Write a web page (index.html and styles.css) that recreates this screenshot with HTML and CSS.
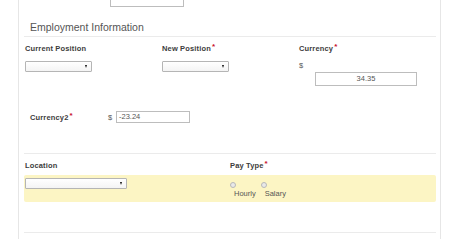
FILE: index.html
```html
<!DOCTYPE html>
<html>
<head>
<meta charset="utf-8">
<link rel="stylesheet" href="styles.css">
</head>
<body>
<div class="frame">
  <div class="head">
    <div class="top-input"></div>
    <h2 class="heading">Employment Information</h2>
  </div>
  <div class="section sec1">
    <div class="row3">
      <div class="col">
        <div class="label">Current Position</div>
        <div class="select w-sm"><i class="caret"></i></div>
      </div>
      <div class="col">
        <div class="label">New Position<span class="req">*</span></div>
        <div class="select w-sm"><i class="caret"></i></div>
      </div>
      <div class="col">
        <div class="label">Currency<span class="req">*</span></div>
        <div class="dollar">$</div>
        <div class="money">34.35</div>
      </div>
    </div>
    <div class="row-c2">
      <div class="label c2-label">Currency2<span class="req">*</span></div>
      <span class="dollar-inline">$</span>
      <div class="text-input">-23.24</div>
    </div>
  </div>
  <div class="section sec2">
    <div class="row2">
      <div class="label">Location</div>
      <div class="label">Pay Type<span class="req">*</span></div>
    </div>
    <div class="band">
      <div class="band-col">
        <div class="select w-lg"><i class="caret"></i></div>
      </div>
      <div class="band-col radios">
        <div class="radio-item"><span class="radio"></span><span class="radio-label">Hourly</span></div>
        <div class="radio-item"><span class="radio"></span><span class="radio-label">Salary</span></div>
      </div>
    </div>
  </div>
</div>
</body>
</html>
```
FILE: styles.css
```css
* { box-sizing: border-box; }
html, body { margin: 0; padding: 0; background: #fff; }
body {
  font-family: "Liberation Sans", Arial, sans-serif;
  color: #444;
  width: 474px;
  height: 239px;
  overflow: hidden;
}
.frame {
  margin-left: 18px;
  width: 423px;
  height: 239px;
  border-left: 1px solid #e6e6e6;
  border-right: 1px solid #e6e6e6;
}
.head {
  margin: 0 4px 0 5px;
  border-bottom: 1px solid #ebebeb;
  height: 37px;
}
.top-input {
  margin-left: 86px;
  width: 74px;
  height: 7px;
  border: 1px solid #bdbdbd;
  border-top: none;
}
.heading {
  margin: 14px 0 0 6px;
  font-size: 10.5px;
  line-height: 12px;
  font-weight: normal;
  color: #555;
}
.section {
  margin: 0 4px 0 5px;
  border-bottom: 1px solid #ebebeb;
}
.sec1 { padding: 7px 0 30px; }
.row3 {
  display: grid;
  grid-template-columns: 137px 137px 137px;
}
.col { padding-left: 1px; }
.label {
  font-size: 7.5px;
  line-height: 9px;
  font-weight: bold;
  color: #3c3c3c;
  letter-spacing: 0.15px;
}
.req {
  color: #c8102e;
  font-size: 8px;
  position: relative;
  top: -2px;
  margin-left: 1px;
}
.select {
  margin-top: 8px;
  height: 11px;
  border: 1px solid #b5b5b5;
  border-radius: 1px;
  background: linear-gradient(#fff, #f4f4f4);
  display: flex;
  justify-content: flex-end;
  align-items: center;
  padding-right: 4px;
}
.w-sm { width: 67px; }
.w-lg { width: 102px; margin-top: 3px; }
.caret {
  width: 0;
  height: 0;
  border-left: 1.5px solid transparent;
  border-right: 1.5px solid transparent;
  border-top: 3px solid #111;
}
.dollar {
  margin-top: 8px;
  font-size: 7.5px;
  line-height: 9px;
  color: #555;
}
.money {
  margin: 2px 0 0 16px;
  width: 102px;
  height: 14px;
  border: 1px solid #bdbdbd;
  font-size: 7.5px;
  line-height: 12px;
  text-align: center;
  color: #555;
}
.row-c2 {
  margin-top: 25px;
  display: flex;
  align-items: center;
  padding-left: 6px;
}
.c2-label { width: 78px; }
.dollar-inline {
  font-size: 7.5px;
  color: #555;
  width: 8px;
}
.text-input {
  width: 74px;
  height: 12px;
  border: 1px solid #bdbdbd;
  font-size: 7.5px;
  line-height: 10px;
  padding-left: 2px;
  color: #555;
}
.sec2 { padding: 7px 0 30px; }
.row2 {
  display: grid;
  grid-template-columns: 205px 206px;
  padding-left: 1px;
}
.band {
  margin-top: 5px;
  height: 27px;
  background: #fcf5c4;
  border-radius: 2px;
  display: grid;
  grid-template-columns: 205px 206px;
  padding-left: 1px;
}
.radios {
  display: flex;
  gap: 5px;
  padding-top: 7px;
}
.radio-item {
  display: flex;
  flex-direction: column;
  align-items: flex-start;
}
.radio {
  width: 6px;
  height: 6px;
  border-radius: 50%;
  border: 1px solid #b8b8b8;
  background: #e9e9e9;
}
.radio-label {
  margin: 1px 0 0 4px;
  font-size: 7.5px;
  line-height: 9px;
  color: #555;
}
```
